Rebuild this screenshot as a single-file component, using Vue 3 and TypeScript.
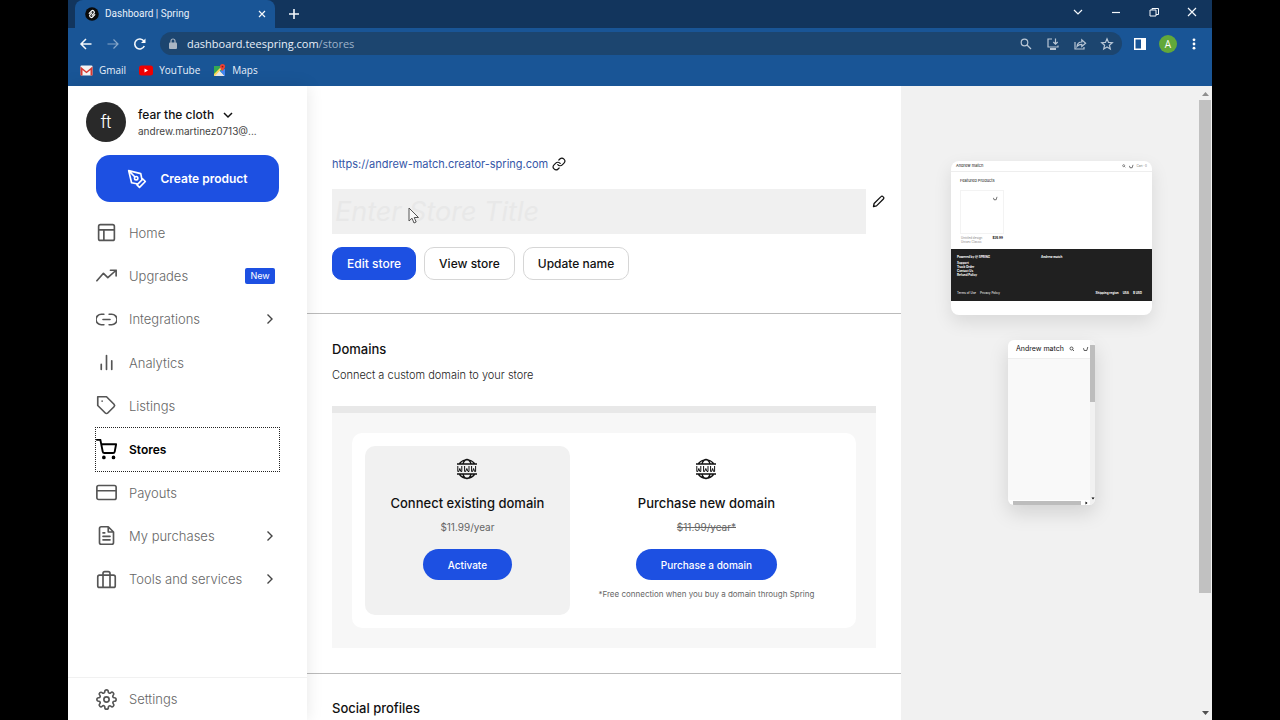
<script setup lang="ts">
interface NavItem {
  label: string
  icon: string
  badge?: string
  expandable?: boolean
  active?: boolean
}

const navItems: NavItem[] = [
  { label: 'Home', icon: 'M5 3h14a2 2 0 0 1 2 2v14a2 2 0 0 1-2 2H5a2 2 0 0 1-2-2V5a2 2 0 0 1 2-2zM3 9h18M9 21V9' },
  { label: 'Upgrades', icon: 'M1 18l7.500-8.500 5 5L23 6M16.500 6H23v6.500', badge: 'New' },
  { label: 'Integrations', icon: 'M15 6h3a6 6 0 0 1 0 12h-3M9 18H6A6 6 0 0 1 6 6h3M8 12h8', expandable: true },
  { label: 'Analytics', icon: 'M18 20V10M12 20V4M6 20v-6' },
  { label: 'Listings', icon: 'M20.590 13.410l-7.170 7.170a2 2 0 0 1-2.830 0L2 12V2h10l8.590 8.590a2 2 0 0 1 0 2.820zM7 7h.01' },
  { label: 'Stores', icon: 'M1 1h4l2.680 13.390a2 2 0 0 0 2 1.610h9.720a2 2 0 0 0 2-1.610L23 6H6M9 20a1 1 0 1 0 0 2 1 1 0 0 0 0-2zM20 20a1 1 0 1 0 0 2 1 1 0 0 0 0-2z', active: true },
  { label: 'Payouts', icon: 'M3 4h18a2 2 0 0 1 2 2v12a2 2 0 0 1-2 2H3a2 2 0 0 1-2-2V6a2 2 0 0 1 2-2zM1 10h22' },
  { label: 'My purchases', icon: 'M14 2H6a2 2 0 0 0-2 2v16a2 2 0 0 0 2 2h12a2 2 0 0 0 2-2V8zM14 2v6h6M16 13H8M16 17H8M10 9H8', expandable: true },
  { label: 'Tools and services', icon: 'M4 7h16a2 2 0 0 1 2 2v10a2 2 0 0 1-2 2H4a2 2 0 0 1-2-2V9a2 2 0 0 1 2-2zM16 21V5a2 2 0 0 0-2-2h-4a2 2 0 0 0-2 2v16', expandable: true },
]

const footerLinks: string[] = ['Support', 'Track Order', 'Contact Us', 'Refund Policy']
</script>

<template>
  <div class="screen">
    <div class="window">
      <header class="chrome">
        <div class="tabs">
          <div class="tab">
            <svg class="favicon" viewBox="0 0 14 14"><circle cx="7" cy="7" r="6.800" fill="#0a0a0a" /><path d="M4.200 6.300L6.500 4a1.700 1.700 0 0 1 2.400 2.400L7 8.200M9.800 7.600L7.500 10A1.700 1.700 0 0 1 5.100 7.600L6.800 5.900" fill="none" stroke="#fff" stroke-width="1.200" stroke-linecap="round" /></svg>
            <span class="tab-title">Dashboard | Spring</span>
            <button class="icon-btn" aria-label="Close tab"><svg width="10" height="10" viewBox="0 0 10 10"><path d="M2 2l6 6M8 2l-6 6" /></svg></button>
          </div>
          <button class="icon-btn new-tab" aria-label="New tab"><svg width="12" height="12" viewBox="0 0 12 12"><path d="M6 1v10M1 6h10" stroke-width="1.600" /></svg></button>
          <div class="win-controls">
            <button class="icon-btn" aria-label="Search tabs"><svg width="12" height="12" viewBox="0 0 12 12"><path d="M2 4l4 4 4-4" /></svg></button>
            <button class="icon-btn" aria-label="Minimize"><svg width="12" height="12" viewBox="0 0 12 12"><path d="M2 6.500h8" /></svg></button>
            <button class="icon-btn" aria-label="Restore"><svg width="12" height="12" viewBox="0 0 12 12"><path d="M2 4h6v6H2zM4 4V2.500h6.500V8.500H8" stroke-width="1" /></svg></button>
            <button class="icon-btn" aria-label="Close"><svg width="12" height="12" viewBox="0 0 12 12"><path d="M2 2l8 8M10 2l-8 8" /></svg></button>
          </div>
        </div>

        <div class="toolbar">
          <button class="icon-btn" aria-label="Back"><svg width="14" height="14" viewBox="0 0 14 14"><path d="M12.500 7H2M7 2L2 7l5 5" stroke-width="1.500" /></svg></button>
          <button class="icon-btn dim" aria-label="Forward"><svg width="14" height="14" viewBox="0 0 14 14"><path d="M1.500 7H12M7.500 2.500L12 7l-4.500 4.500" /></svg></button>
          <button class="icon-btn" aria-label="Reload"><svg width="14" height="14" viewBox="0 0 14 14"><path d="M11.300 9A5 5 0 1 1 10.800 4" stroke-width="1.600" /><path d="M12.500 1.500V6H8z" fill="#fff" stroke="none" /></svg></button>
          <div class="address">
            <svg class="lock" width="10" height="12" viewBox="0 0 10 12"><rect x="1" y="4.500" width="8" height="6.500" rx="1" fill="#aab6c4" /><path d="M3 5V3a2 2 0 0 1 4 0v2" fill="none" stroke="#aab6c4" stroke-width="1.200" /></svg>
            <span class="url">dashboard.teespring.com<span class="path">/stores</span></span>
            <button class="icon-btn soft" aria-label="Zoom"><svg width="14" height="14" viewBox="0 0 14 14"><circle cx="5.500" cy="5.500" r="3.300" /><path d="M8 8l4 4" /></svg></button>
            <button class="icon-btn soft" aria-label="Install app"><svg width="14" height="14" viewBox="0 0 14 14"><path d="M6 2H2v8h10V8.500M9.500 1.500V7M7.300 5l2.200 2.200L11.700 5" /><path d="M4 12h6" stroke-width="2" /></svg></button>
            <button class="icon-btn soft" aria-label="Share"><svg width="14" height="14" viewBox="0 0 14 14"><path d="M2 5v7h9v-2M4 9.500C4.300 6.500 6 5 8.800 5V2.800L12.600 6.200 8.800 9.500V7.300C6.700 7.300 5.200 8 4 9.500z" /></svg></button>
            <button class="icon-btn soft" aria-label="Bookmark"><svg width="14" height="14" viewBox="0 0 14 14"><path d="M7 1.800l1.500 3.600 3.800.3-2.900 2.500.9 3.800L7 10l-3.300 2 .9-3.800-2.900-2.500 3.800-.3z" /></svg></button>
          </div>
          <button class="icon-btn" aria-label="Side panel"><svg width="12" height="12" viewBox="0 0 12 12"><path d="M0 0h12v12H0zM1.500 1.500v9H7v-9z" fill="#fff" fill-rule="evenodd" stroke="none" /></svg></button>
          <button class="account" aria-label="Account A">A</button>
          <button class="icon-btn menu" aria-label="Menu"><svg width="4" height="12" viewBox="0 0 4 12"><g fill="#fff" stroke="none"><circle cx="2" cy="1.800" r="1.400" /><circle cx="2" cy="6" r="1.400" /><circle cx="2" cy="10.200" r="1.400" /></g></svg></button>
        </div>

        <nav class="bookmarks" aria-label="Bookmarks">
          <a href="#"><svg width="13" height="13" viewBox="0 0 13 13"><rect x="0.500" y="1.500" width="12" height="10" rx="1" fill="#f3f3f3" /><path d="M.5 11.500v-9l6 5 6-5v9h-2V6l-4 3.200L2.500 6v5.500z" fill="#d93a32" /></svg>Gmail</a>
          <a href="#"><svg width="14" height="13" viewBox="0 0 14 13"><rect y="1.500" width="14" height="10" rx="2.500" fill="#f00000" /><path d="M5.500 4.500v4L9 6.500z" fill="#fff" /></svg>YouTube</a>
          <a href="#"><svg width="13" height="13" viewBox="0 0 13 13"><path d="M1 2h10v10H1z" fill="#34a853" /><path d="M1 12l5.500-5.500L12 12z" fill="#e8e8e8" /><path d="M1 10L9 2h2L2 12H1z" fill="#fbd75b" /><path d="M7 7l4.500 5H12V5z" fill="#4285f4" /><path d="M9.500 0a2.600 2.600 0 0 0-2.600 2.600C6.900 4.500 9.500 7 9.500 7s2.600-2.500 2.600-4.400A2.600 2.600 0 0 0 9.500 0z" fill="#ea4335" /><circle cx="9.500" cy="2.600" r=".9" fill="#8c1c13" /></svg>Maps</a>
        </nav>
      </header>

      <div class="page">
        <aside class="sidebar">
          <button class="profile">
            <span class="avatar">ft</span>
            <span class="who">
              <span class="name">fear the cloth <svg width="10" height="8" viewBox="0 0 10 8"><path d="M1 2l4 4 4-4" /></svg></span>
              <span class="email">andrew.martinez0713@...</span>
            </span>
          </button>
          <button class="create">
            <svg width="20" height="20" viewBox="0 0 24 24"><path d="M12 19l7-7 3 3-7 7zM18 13l-1.500-7.500L2 2l3.500 14.500L13 18zM2 2l7.586 7.586" /><circle cx="11" cy="11" r="2" /></svg>
            Create product
          </button>
          <nav class="nav" aria-label="Main">
            <a v-for="item in navItems" :key="item.label" href="#" class="nav-item" :class="{ active: item.active }">
              <svg class="nav-icon" viewBox="0 0 24 24"><path :d="item.icon" /></svg>
              <span>{{ item.label }}</span>
              <span v-if="item.badge" class="badge">{{ item.badge }}</span>
              <svg v-if="item.expandable" class="chevron" viewBox="0 0 8 12"><path d="M1.500 1.500L6 6l-4.500 4.500" /></svg>
            </a>
          </nav>
          <div class="settings">
            <a href="#" class="nav-item">
              <svg class="nav-icon" viewBox="0 0 24 24"><circle cx="12" cy="12" r="3" /><path d="M19.400 15a1.650 1.650 0 0 0 .33 1.820l.06.06a2 2 0 0 1-2.830 2.830l-.06-.06a1.650 1.650 0 0 0-2.800 1.170V21a2 2 0 0 1-4 0v-.09A1.650 1.650 0 0 0 7.200 19.650l-.06.06a2 2 0 0 1-2.830-2.830l.06-.06A1.650 1.650 0 0 0 3.090 14H3a2 2 0 0 1 0-4h.09A1.650 1.650 0 0 0 4.370 7.180l-.06-.06a2 2 0 0 1 2.830-2.830l.06.06A1.650 1.650 0 0 0 10 3.090V3a2 2 0 0 1 4 0v.09a1.650 1.650 0 0 0 2.800 1.260l.06-.06a2 2 0 0 1 2.830 2.830l-.06.06A1.650 1.650 0 0 0 20.910 10H21a2 2 0 0 1 0 4h-.09a1.650 1.650 0 0 0-1.510 1z" /></svg>
              <span>Settings</span>
            </a>
          </div>
        </aside>

        <main class="content">
          <section class="store">
            <div class="link-row">
              <a href="#">https://andrew-match.creator-spring.com</a>
              <button class="plain" aria-label="Copy link"><svg width="14" height="14" viewBox="0 0 24 24"><path d="M10 13a5 5 0 0 0 7.540.54l3-3a5 5 0 0 0-7.070-7.070l-1.720 1.710M14 11a5 5 0 0 0-7.540-.54l-3 3a5 5 0 0 0 7.070 7.070l1.710-1.710" /></svg></button>
            </div>
            <div class="title-row">
              <input class="title-input" type="text" placeholder="Enter Store Title" aria-label="Store title" />
              <button class="plain" aria-label="Edit title"><svg width="13" height="13" viewBox="0 0 13 13"><path d="M1.500 11.500l.6-3L9 1.600a1.350 1.350 0 0 1 2 0l.4.4a1.350 1.350 0 0 1 0 2L4.500 10.900z" stroke-width="1.300" /></svg></button>
              <svg class="pointer" width="12" height="18" viewBox="0 0 12 18"><path d="M1 1v13l3-2.800 2 4.800 2.200-1-2-4.500h4.300z" /></svg>
            </div>
            <div class="actions">
              <button class="btn primary">Edit store</button>
              <button class="btn">View store</button>
              <button class="btn">Update name</button>
            </div>
          </section>

          <section class="domains">
            <h2>Domains</h2>
            <p class="lead">Connect a custom domain to your store</p>
            <div class="panel">
              <div class="options">
                <div class="option shaded">
                  <svg class="globe" viewBox="0 0 22 22"><path d="M3.500 5.500A9.500 9.500 0 0 1 18.500 5.500M3.500 16.500A9.500 9.500 0 0 0 18.500 16.500M1 6h20M1 16h20M7 5.500C8 3 9.300 1.500 11 1.500s3 1.500 4 4M7 16.500c1 2.500 2.300 4 4 4s3-1.500 4-4" /><path class="www" d="M1.800 8v5.500h1l1-3 1 3h1V8M8.600 8v5.500h1l1.200-3 1.200 3h1V8M15.600 8v5.500h1l1-3 1 3h1V8" /></svg>
                  <h3>Connect existing domain</h3>
                  <p class="price">$11.99/year</p>
                  <button class="pill">Activate</button>
                </div>
                <div class="option">
                  <svg class="globe" viewBox="0 0 22 22"><path d="M3.500 5.500A9.500 9.500 0 0 1 18.500 5.500M3.500 16.500A9.500 9.500 0 0 0 18.500 16.500M1 6h20M1 16h20M7 5.500C8 3 9.300 1.500 11 1.500s3 1.500 4 4M7 16.500c1 2.500 2.300 4 4 4s3-1.500 4-4" /><path class="www" d="M1.800 8v5.500h1l1-3 1 3h1V8M8.600 8v5.500h1l1.200-3 1.200 3h1V8M15.600 8v5.500h1l1-3 1 3h1V8" /></svg>
                  <h3>Purchase new domain</h3>
                  <p class="price"><s>$11.99/year*</s></p>
                  <button class="pill">Purchase a domain</button>
                  <p class="note">*Free connection when you buy a domain through Spring</p>
                </div>
              </div>
            </div>
          </section>

          <section class="social"><h2>Social profiles</h2></section>
        </main>

        <aside class="previews">
          <div class="desktop">
            <div class="d-head">
              <span>Andrew match</span>
              <svg class="mini-search" viewBox="0 0 6 6"><circle cx="2.500" cy="2.500" r="1.500" /><path d="M3.600 3.600L5 5" /></svg>
              <svg class="mini-cart" viewBox="0 0 6 6"><path d="M.5 2.200l.7 2.300h2.600l1-3.500" /></svg>
              <span class="cart-text">Cart · 0</span>
            </div>
            <div class="d-body">
              <div class="featured">Featured Products</div>
              <div class="product"><svg class="mini-cart" viewBox="0 0 6 6"><path d="M.5 2.200l.7 2.300h2.600l1-3.500" /></svg></div>
              <div class="product-info"><span>Untitled design<br />Unisex Classic</span><b>$26.99</b></div>
            </div>
            <div class="d-foot">
              <div class="foot-cols">
                <div><b>Powered by @ SPRING</b><b v-for="link in footerLinks" :key="link">{{ link }}</b></div>
                <b class="foot-name">Andrew match</b>
              </div>
              <div class="foot-legal"><span>Terms of Use</span><span>Privacy Policy</span><b>Shipping region</b><b>USA</b><b>$ USD</b></div>
            </div>
          </div>

          <div class="phone">
            <div class="p-main">
              <div class="p-head">
                <span>Andrew match</span>
                <svg class="p-search" viewBox="0 0 6 6"><circle cx="2.500" cy="2.500" r="1.500" /><path d="M3.600 3.600L5 5" /></svg>
                <svg class="p-cart" viewBox="0 0 6 6"><path d="M.5 2.200l.7 2.300h2.600l1-3.500" /></svg>
              </div>
              <div class="p-fill"></div>
              <div class="p-hscroll"><i></i><svg width="3" height="4" viewBox="0 0 3 4"><path d="M.5.500L2.500 2l-2 1.500z" /></svg></div>
            </div>
            <div class="p-vscroll"><i></i><svg width="4" height="3" viewBox="0 0 4 3"><path d="M.5.500h3L2 2.500z" /></svg></div>
          </div>
        </aside>

        <div class="scrollbar">
          <svg width="7" height="4" viewBox="0 0 7 4"><path d="M3.500 0L7 4H0z" fill="#8f8f8f" /></svg>
          <i></i>
          <svg width="7" height="4" viewBox="0 0 7 4"><path d="M0 0h7L3.500 4z" fill="#505050" /></svg>
        </div>
      </div>
    </div>
  </div>
</template>

<style>
body {
  margin: 0;
  background: #000;
}
</style>

<style scoped>
* {
  box-sizing: border-box;
}
button,
input {
  font: inherit;
  color: inherit;
  border: 0;
  padding: 0;
  background: none;
}
a {
  color: inherit;
  text-decoration: none;
}
svg {
  display: block;
  flex: none;
}
p, h2, h3 {
  margin: 0;
}
.screen {
  height: 100vh;
  padding: 0 68px;
  background: #000;
  overflow: hidden;
}
.window {
  height: 100%;
  display: flex;
  flex-direction: column;
  font-family: Inter, "Open Sans", sans-serif;
  color: #111;
}

/* Browser chrome */
.chrome {
  flex: none;
  background: #195596;
  color: #e8f0fa;
  font: 11px/16px "Open Sans", "Noto Sans", sans-serif;
}
.tabs {
  display: flex;
  align-items: center;
  height: 28px;
  padding-left: 7px;
  background: #12355d;
}
.tab {
  display: flex;
  align-items: center;
  width: 200px;
  height: 28px;
  padding: 0 8px 0 10px;
  gap: 6px;
  border-radius: 8px 8px 0 0;
  background: #195596;
}
.favicon {
  width: 14px;
  height: 14px;
}
.tab-title {
  flex: 1;
  font-family: Roboto, sans-serif;
  font-size: 10px;
}
.icon-btn {
  display: grid;
  place-items: center;
}
.icon-btn svg {
  fill: none;
  stroke: #f4f8fc;
  stroke-width: 1.200;
}
.icon-btn.soft svg {
  stroke: #b9c7d6;
}
.icon-btn.dim {
  opacity: 0.5;
}
.new-tab {
  margin-left: 13px;
}
.win-controls {
  display: flex;
  gap: 26px;
  margin-left: auto;
  padding: 0 14px 4px 0;
}
.toolbar {
  display: flex;
  align-items: center;
  height: 31px;
  padding: 0 16px 0 11px;
  gap: 13px;
}
.address {
  flex: 1;
  display: flex;
  align-items: center;
  height: 23px;
  padding: 0 8px 0 8px;
  margin-right: -1px;
  gap: 13px;
  border-radius: 12px;
  background: #1c456f;
}
.lock {
  margin-right: -4px;
}
.url {
  flex: 1;
}
.path {
  color: #9cb2c9;
}
.account {
  width: 18px;
  height: 18px;
  border-radius: 50%;
  background: #62a83a;
  color: #fff;
  font-size: 10px;
  line-height: 18px;
}
.menu {
  margin-left: 2px;
}
.bookmarks {
  display: flex;
  align-items: center;
  height: 27px;
  padding: 0 12px 5px;
  gap: 13px;
  font-size: 10px;
}
.bookmarks a {
  display: flex;
  align-items: center;
  gap: 6px;
}

/* Page */
.page {
  flex: 1;
  min-height: 0;
  display: flex;
  background: #fff;
}
.sidebar {
  flex: none;
  width: 239px;
  display: flex;
  flex-direction: column;
  padding-top: 16px;
  position: relative;
  box-shadow: 0 0 16px rgba(0, 0, 0, 0.1);
}
.profile {
  display: flex;
  align-items: center;
  gap: 12px;
  margin-left: 18px;
  text-align: left;
}
.avatar {
  width: 40px;
  height: 40px;
  border-radius: 50%;
  background: #292929;
  color: #fff;
  font-size: 17px;
  font-weight: 300;
  line-height: 40px;
  text-align: center;
}
.who {
  display: grid;
}
.name {
  display: flex;
  align-items: center;
  gap: 9px;
  font-size: 12px;
  font-weight: 500;
  line-height: 18px;
}
.name svg {
  fill: none;
  stroke: #111;
  stroke-width: 1.500;
}
.email {
  font-size: 10px;
  line-height: 14px;
  color: #444;
}
.create {
  display: flex;
  align-items: center;
  justify-content: center;
  gap: 13px;
  height: 47px;
  margin: 13px 28px 0;
  border-radius: 14px;
  background: #1d50e2;
  color: #fff;
  font-size: 12px;
  font-weight: 600;
}
.create svg {
  fill: none;
  stroke: #fff;
  stroke-width: 2;
  stroke-linejoin: round;
}
.nav {
  display: flex;
  flex-direction: column;
  height: 390px;
  margin: 9px 28px 0;
}
.nav .nav-item {
  flex: 1;
}
.nav-item {
  display: flex;
  align-items: center;
  gap: 12px;
  font-size: 13px;
  font-weight: 300;
  color: #666;
}
.nav-icon {
  width: 21px;
  height: 21px;
  fill: none;
  stroke: #555;
  stroke-width: 1.900;
  stroke-linecap: round;
  stroke-linejoin: round;
}
.nav-item.active {
  color: #000;
  font-weight: 600;
  font-size: 12px;
  outline: 1px dotted #222;
}
.active .nav-icon {
  stroke: #000;
  stroke-width: 2.200;
}
.badge {
  margin: 0 4px 0 auto;
  width: 30px;
  border-radius: 2px;
  background: #1d50e2;
  color: #fff;
  font-size: 9px;
  font-weight: 400;
  line-height: 16px;
  text-align: center;
}
.chevron {
  width: 8px;
  height: 12px;
  margin: 0 5px 0 auto;
  fill: none;
  stroke: #444;
  stroke-width: 1.400;
}
.settings {
  margin-top: auto;
  padding: 0 28px;
  border-top: 1px solid #f1f1f1;
}
.settings .nav-item {
  height: 42px;
}

.content {
  flex: 1;
  min-width: 0;
  overflow: hidden;
}
.content section {
  padding: 0 25px;
}
.content .store {
  padding-top: 69px;
  padding-bottom: 33px;
  border-bottom: 1px solid #bbb;
}
.link-row {
  display: flex;
  align-items: center;
  gap: 4px;
  height: 18px;
  font-size: 11px;
  color: #3557a8;
}
.plain svg {
  fill: none;
  stroke: #111;
  stroke-width: 2;
  stroke-linecap: round;
  stroke-linejoin: round;
}
.title-row {
  position: relative;
  display: flex;
  gap: 6px;
  margin: 16px -10px 13px 0;
}
.title-input {
  flex: 1;
  min-width: 0;
  height: 45px;
  padding: 0 3px;
  background: #f0f0f0;
  font-size: 27px;
  font-style: italic;
}
.title-input::placeholder {
  color: #e8e8e8;
  opacity: 1;
}
.title-row .plain {
  align-self: flex-start;
  width: 14px;
  padding-top: 6px;
}
.pointer {
  position: absolute;
  left: 76px;
  top: 18px;
  fill: #f8f8f8;
  stroke: #555;
}
.actions {
  display: flex;
  gap: 8px;
}
.btn {
  height: 33px;
  padding: 0 14px;
  border: 1px solid #d6d6d6;
  border-radius: 10px;
  font-size: 12px;
  font-weight: 500;
}
.primary {
  background: #1d50e2;
  border-color: #1d50e2;
  color: #fff;
}
h2 {
  font-size: 13px;
  line-height: 20px;
  font-weight: 500;
}
.content .domains {
  padding-top: 25px;
  padding-bottom: 25px;
  border-bottom: 1px solid #bbb;
}
.lead {
  margin: 7px 0 22px;
  font-size: 11px;
  font-weight: 300;
  line-height: 18px;
  color: #222;
}
.panel {
  padding: 20px;
  border-top: 7px solid #e8e8e8;
  background: #f7f7f7;
}
.options {
  display: flex;
  padding: 13px;
  border-radius: 10px;
  background: #fff;
}
.option {
  flex: 4;
  display: flex;
  flex-direction: column;
  align-items: center;
  height: 169px;
  padding-top: 12px;
}
.shaded {
  flex: 3;
  border-radius: 10px;
  background: #f1f1f1;
}
.globe {
  width: 22px;
  height: 22px;
  fill: none;
  stroke: #111;
  stroke-width: 1.300;
}
.www {
  stroke-width: 1;
}
h3 {
  margin-top: 13px;
  font-size: 13px;
  line-height: 20px;
  font-weight: 500;
  white-space: nowrap;
}
.price {
  margin: 6px 0 14px;
  font-size: 10px;
  line-height: 16px;
  color: #666;
}
.pill {
  flex: none;
  height: 31px;
  padding: 0 25px;
  border-radius: 16px;
  background: #1d50e2;
  color: #fff;
  font-size: 10px;
  font-weight: 500;
}
.note {
  margin-top: 7px;
  font-size: 8px;
  line-height: 14px;
  color: #666;
  white-space: nowrap;
}
.content .social {
  padding-top: 24px;
}

/* Store previews */
.previews {
  flex: none;
  width: 297px;
  display: flex;
  flex-direction: column;
  align-items: center;
  gap: 25px;
  padding: 75px 0 0 4px;
  background: #f1f1f1;
}
.desktop {
  width: 201px;
  height: 154px;
  overflow: hidden;
  border-radius: 8px;
  background: #fff;
  box-shadow: 0 7px 18px rgba(0, 0, 0, 0.1);
  font-size: 3px;
  line-height: 4px;
}
.d-head {
  display: flex;
  align-items: center;
  height: 11px;
  padding: 0 5px;
  gap: 3px;
  border-bottom: 1px solid #eee;
  font-size: 4px;
}
.mini-search {
  width: 4px;
  height: 4px;
  margin-left: auto;
}
.mini-search,
.mini-cart,
.p-search,
.p-cart {
  fill: none;
  stroke: #333;
  stroke-width: 0.800;
}
.mini-cart {
  width: 5px;
  height: 5px;
}
.cart-text {
  font-size: 3px;
  color: #777;
}
.d-body {
  height: 77px;
  padding: 7px 9px;
}
.featured {
  font-size: 4px;
}
.product {
  display: flex;
  justify-content: flex-end;
  width: 44px;
  height: 44px;
  margin-top: 7px;
  padding: 5px;
  border: 1px solid #f3f3f3;
}
.product-info {
  display: flex;
  justify-content: space-between;
  width: 42px;
  margin: 2px 0 0 1px;
  color: #888;
}
.product-info b {
  color: #111;
}
.d-foot {
  display: flex;
  flex-direction: column;
  justify-content: space-between;
  height: 52px;
  padding: 6px 10px 6px 6px;
  background: #202020;
  color: #fff;
}
.foot-cols {
  display: grid;
  grid-template-columns: 84px 1fr;
}
.foot-cols div {
  display: grid;
}
.foot-cols div b:first-child {
  margin-bottom: 2px;
}
.foot-legal {
  display: flex;
  gap: 4px;
}
.foot-legal span + b {
  margin-left: auto;
}
.phone {
  display: flex;
  width: 87px;
  height: 165px;
  overflow: hidden;
  border-radius: 6px;
  background: #fff;
  box-shadow: 0 8px 20px rgba(0, 0, 0, 0.13);
}
.p-main {
  flex: 1;
  display: flex;
  flex-direction: column;
}
.p-head {
  display: flex;
  align-items: center;
  height: 18px;
  padding-left: 8px;
  gap: 5px;
  font-size: 7px;
  line-height: 18px;
  white-space: nowrap;
}
.p-search,
.p-cart {
  width: 6px;
  height: 6px;
}
.p-cart {
  margin-left: 3px;
}
.p-fill {
  flex: 1;
  background: #f9f9f9;
  border-top: 1px solid #eee;
}
.p-hscroll {
  display: flex;
  align-items: center;
  justify-content: space-between;
  height: 5px;
  padding: 0 2px 0 5px;
}
.p-hscroll i {
  width: 68px;
  height: 4px;
  background: #bdbdbd;
}
.p-vscroll {
  display: flex;
  flex-direction: column;
  align-items: center;
  justify-content: space-between;
  width: 5px;
  padding: 5px 0;
  background: #f1f1f1;
}
.p-vscroll i {
  width: 5px;
  height: 57px;
  background: #bdbdbd;
}
.scrollbar {
  flex: none;
  display: flex;
  flex-direction: column;
  align-items: center;
  width: 14px;
  padding: 6px 1px 5px;
  background: #f1f1f1;
}
.scrollbar i {
  width: 12px;
  height: 493px;
  margin: 4px 0 auto;
  background: #c1c1c1;
}
</style>
